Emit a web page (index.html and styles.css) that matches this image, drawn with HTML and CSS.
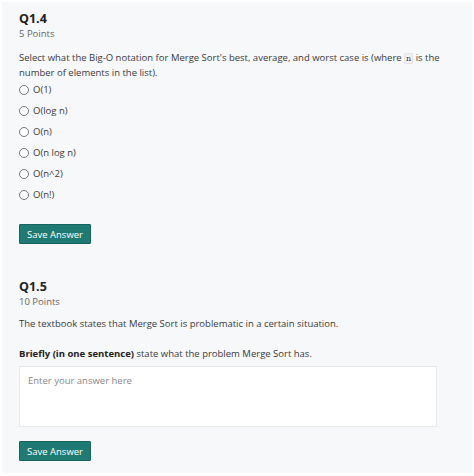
FILE: index.html
```html
<!DOCTYPE html>
<html>
  <head>
    <link rel="stylesheet" href="styles.css">
  </head>
  <body>
    <div class="panel">
      <div class="question">
        <h2 class="q-title">Q1.4</h2>
        <div class="q-points">5 Points</div>
        <p class="q-text">Select what the Big-O notation for Merge Sort's best, average, and worst case is (where <code>n</code> is the number of elements in the list).</p>
        <div class="options">
          <label class="option"><span class="radio"></span>O(1)</label>
          <label class="option"><span class="radio"></span>O(log n)</label>
          <label class="option"><span class="radio"></span>O(n)</label>
          <label class="option"><span class="radio"></span>O(n log n)</label>
          <label class="option"><span class="radio"></span>O(n^2)</label>
          <label class="option"><span class="radio"></span>O(n!)</label>
        </div>
        <button class="save-button">Save Answer</button>
      </div>

      <div class="question second">
        <h2 class="q-title">Q1.5</h2>
        <div class="q-points">10 Points</div>
        <p class="q-text">The textbook states that Merge Sort is problematic in a certain situation.</p>
        <p class="q-text brief"><b>Briefly (in one sentence)</b> state what the problem Merge Sort has.</p>
        <div class="answer-box">Enter your answer here</div>
        <button class="save-button">Save Answer</button>
      </div>
    </div>
  </body>
</html>
```

FILE: styles.css
```css
body {
  margin: 0;
  padding: 2px;
  background: #fff;
  font-family: "Open Sans", Lato, sans-serif;
  color: #333;
}

.panel {
  background: #f7f8fa;
  height: 471px;
  width: 470px;
  box-sizing: border-box;
  padding: 9px 17px 0;
}

.q-title {
  margin: 0;
  font-size: 12.5px;
  font-weight: bold;
  color: #222;
  line-height: 16px;
}

.q-points {
  font-size: 9.5px;
  color: #666;
  line-height: 13px;
}

.q-text {
  margin: 10px 0 0;
  font-size: 9.5px;
  line-height: 15px;
  color: #3a3a3a;
}

.q-text b {
  color: #222;
}

.second .q-text {
  margin-top: 8px;
}

.second .brief {
  margin-top: 15px;
}

code {
  display: inline-block;
  font-family: "DejaVu Serif", serif;
  font-size: 8px;
  line-height: 9px;
  vertical-align: 0;
  background: #eef0f3;
  border: 1px solid #e2e4e8;
  padding: 0 1px;
}

.options {
  display: flex;
  flex-direction: column;
  gap: 5px;
  margin-top: 2px;
}

.option {
  display: flex;
  align-items: center;
  gap: 4px;
  font-size: 9.5px;
  line-height: 16px;
  color: #3a3a3a;
}

.radio {
  width: 8px;
  height: 8px;
  border: 1.3px solid #777;
  border-radius: 50%;
  background: #fff;
}

.save-button {
  display: block;
  margin-top: 21px;
  background: #1e7a72;
  color: #fff;
  border: 1px solid #16645d;
  border-radius: 1px;
  font-family: "Open Sans", sans-serif;
  font-size: 9.5px;
  white-space: nowrap;
  padding: 0;
  width: 72px;
  height: 20px;
}

.second {
  margin-top: 35px;
}

.answer-box {
  margin-top: 5px;
  width: 418px;
  height: 61px;
  box-sizing: border-box;
  background: #fff;
  border: 1px solid #e6e8eb;
  padding: 7px 8px;
  font-size: 9.5px;
  color: #888;
}

.second .save-button {
  margin-top: 14px;
}
```
